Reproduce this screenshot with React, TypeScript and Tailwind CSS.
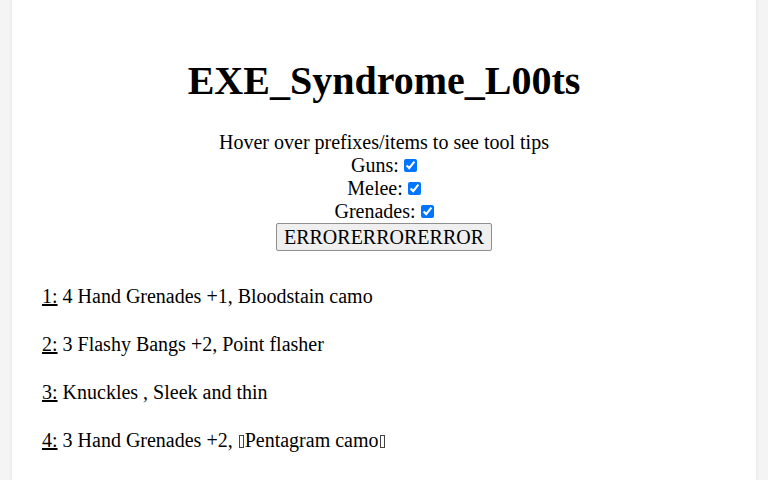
import React from "react";

interface Loot {
  id: number;
  text: React.ReactNode;
}

// missing-glyph box, as the browser draws an unknown symbol
const Tofu: React.FC = () => (
  <span className="mx-[1px] inline-block h-[13px] w-[5px] border border-[#444] align-[-1px]" />
);

const loot: Loot[] = [
  { id: 1, text: "4 Hand Grenades +1, Bloodstain camo" },
  { id: 2, text: "3 Flashy Bangs +2, Point flasher" },
  { id: 3, text: "Knuckles , Sleek and thin" },
  {
    id: 4,
    text: (
      <>
        3 Hand Grenades +2, <Tofu />
        Pentagram camo
        <Tofu />
      </>
    ),
  },
];

const filters = ["Guns", "Melee", "Grenades"];

const App: React.FC = () => {
  return (
    <div className="min-h-screen bg-[#f4f4f4] font-['Liberation_Serif',serif] text-[20px] text-black">
      <div className="mx-[12px] min-h-screen bg-white px-[30px] pt-[58px] pb-8 shadow-[0_0_4px_rgba(0,0,0,0.08)]">
        {/* Header */}
        <h1 className="text-center text-[40px] font-bold leading-[46px]">
          EXE_Syndrome_L00ts
        </h1>

        {/* Controls */}
        <div className="mt-[27px] flex flex-col items-center leading-[23px]">
          <p>Hover over prefixes/items to see tool tips</p>
          {filters.map((f) => (
            <label key={f} className="flex items-center">
              {f}:
              <input type="checkbox" defaultChecked className="ml-[5px] mb-[1px] h-[13px] w-[13px]" />
            </label>
          ))}
          <button className="h-[28px] rounded-[2px] border border-[#8f8f8f] bg-[#efefef] px-[7px] leading-[23px]">
            ERRORERRORERROR
          </button>
        </div>

        {/* Loot list */}
        <div className="mt-[34px] flex flex-col gap-[25px] leading-[23px]">
          {loot.map((item) => (
            <p key={item.id}>
              <a href="#" className="underline">
                {item.id}:
              </a>{" "}
              {item.text}
            </p>
          ))}
        </div>
      </div>
    </div>
  );
};

export default App;
